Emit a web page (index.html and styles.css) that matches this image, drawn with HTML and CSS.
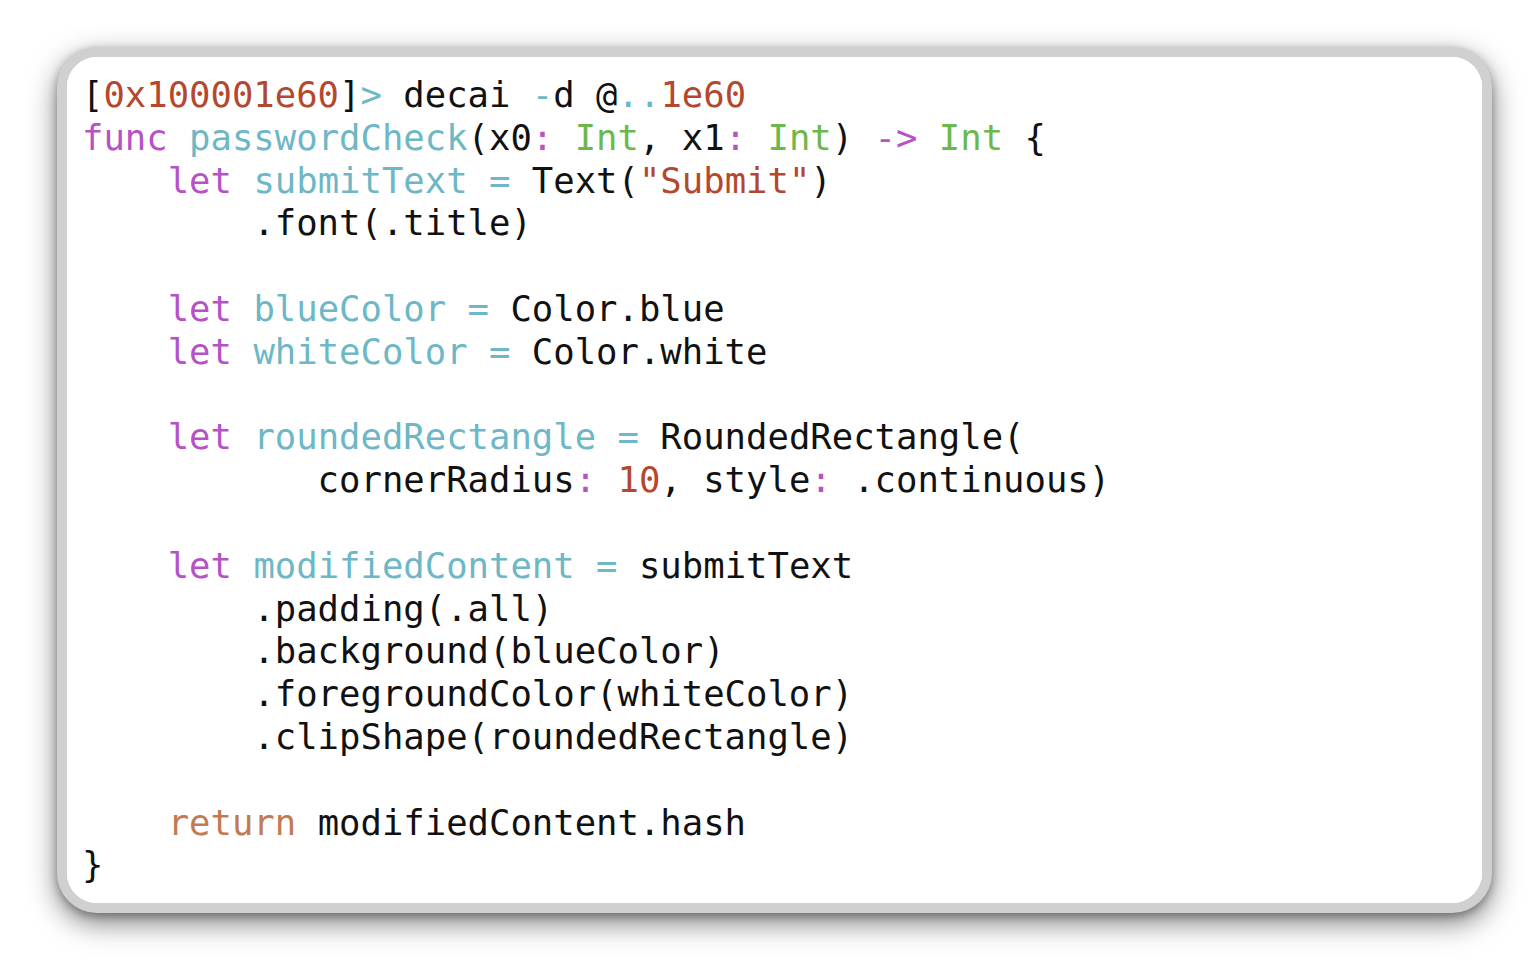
FILE: index.html
```html
<!DOCTYPE html>
<html>
<head>
<meta charset="utf-8">
<link rel="stylesheet" href="styles.css">
</head>
<body>
<div class="frame">
<div class="card">
<pre class="code">[<span class="n">0x100001e60</span>]<span class="c">&gt;</span> decai <span class="c">-</span>d @<span class="c">..</span><span class="n">1e60</span>
<span class="k">func</span> <span class="c">passwordCheck</span>(x0<span class="k">:</span> <span class="t">Int</span>, x1<span class="k">:</span> <span class="t">Int</span>) <span class="k">-&gt;</span> <span class="t">Int</span> {
    <span class="k">let</span> <span class="c">submitText</span> <span class="c">=</span> Text(<span class="n">"Submit"</span>)
        .font(.title)

    <span class="k">let</span> <span class="c">blueColor</span> <span class="c">=</span> Color.blue
    <span class="k">let</span> <span class="c">whiteColor</span> <span class="c">=</span> Color.white

    <span class="k">let</span> <span class="c">roundedRectangle</span> <span class="c">=</span> RoundedRectangle(
           cornerRadius<span class="k">:</span> <span class="n">10</span>, style<span class="k">:</span> .continuous)

    <span class="k">let</span> <span class="c">modifiedContent</span> <span class="c">=</span> submitText
        .padding(.all)
        .background(blueColor)
        .foregroundColor(whiteColor)
        .clipShape(roundedRectangle)

    <span class="r">return</span> modifiedContent.hash
}</pre>
</div>
</div>
</body>
</html>
```

FILE: styles.css
```css
html, body {
  margin: 0;
  padding: 0;
  background: #ffffff;
}

body {
  padding: 47px 0 0 57px;
  min-height: 966px;
  box-sizing: border-box;
}

.frame {
  width: 1435px;
  height: 866px;
  box-sizing: border-box;
  border: 10px solid #d0d0d0;
  border-radius: 40px;
  background: #ffffff;
  box-shadow: 0 10px 28px rgba(0, 0, 0, 0.5), 0 3px 8px rgba(0, 0, 0, 0.28);
}

.card {
  height: 100%;
  border-radius: 30px;
  background: #ffffff;
  padding: 17px 0 0 15px;
  box-sizing: border-box;
}

.code {
  margin: 0;
  font-family: "DejaVu Sans Mono", "Liberation Mono", monospace;
  font-size: 35.6px;
  line-height: 42.8px;
  color: #111111;
  white-space: pre;
}

.n { color: #b4482e; }
.k { color: #b652c6; }
.c { color: #6db7c6; }
.t { color: #6bb84c; }
.r { color: #c17b52; }
```
